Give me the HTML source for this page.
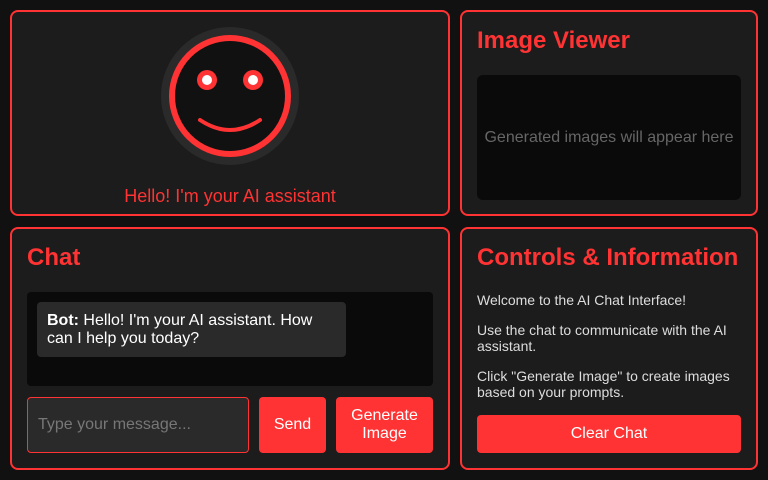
<!DOCTYPE html>
<html><head><style>
*{box-sizing:border-box;margin:0;padding:0}
body{width:768px;height:480px;background:#111;font-family:"Liberation Sans",sans-serif;position:relative;overflow:hidden}
.p{position:absolute;background:#1c1c1c;border:2px solid #ff3333;border-radius:8px}
.a{position:absolute}
h2{position:absolute;color:#ff3333;font-size:24px;font-weight:bold}
.btn{position:absolute;background:#ff3333;color:#fff;border-radius:4px;font-size:16px;display:flex;align-items:center;justify-content:center;text-align:center;line-height:18px}
.t{position:absolute;left:477px;color:#ddd;font-size:14px;line-height:16px;width:270px}
</style></head><body>
<div class="p" style="left:10px;top:10px;width:440px;height:206px"></div>
<div class="p" style="left:460px;top:10px;width:298px;height:206px"></div>
<div class="p" style="left:10px;top:227px;width:440px;height:243px"></div>
<div class="p" style="left:460px;top:227px;width:298px;height:243px"></div>
<svg class="a" style="left:160px;top:26px" width="140" height="140" viewBox="0 0 140 140">
<circle cx="70" cy="70" r="69" fill="#2a2a2a"/>
<circle cx="70" cy="70" r="58" fill="#111" stroke="#ff3333" stroke-width="6"/>
<circle cx="47" cy="54" r="10" fill="#ff3333"/><circle cx="47" cy="54" r="5" fill="#fff"/>
<circle cx="93" cy="54" r="10" fill="#ff3333"/><circle cx="93" cy="54" r="5" fill="#fff"/>
<path d="M40 94 Q70 114 100 94" fill="none" stroke="#ff3333" stroke-width="4" stroke-linecap="round"/>
</svg>
<div class="a" style="left:10px;width:440px;top:186px;text-align:center;color:#ff3333;font-size:18px">Hello! I'm your AI assistant</div>
<h2 style="left:477px;top:27px">Image Viewer</h2>
<div class="a" style="left:477px;top:75px;width:264px;height:125px;background:#0a0a0a;border-radius:6px;color:#666;font-size:16px;display:flex;align-items:center;justify-content:center">Generated images will appear here</div>
<h2 style="left:27px;top:244px">Chat</h2>
<div class="a" style="left:27px;top:292px;width:406px;height:94px;background:#0a0a0a;border-radius:4px"></div>
<div class="a" style="left:37px;top:302px;width:309px;height:55px;background:#2a2a2a;border-radius:4px;color:#fff;font-size:16px;line-height:18px;padding:10px 10px">
<b>Bot:</b> Hello! I'm your AI assistant. How can I help you today?</div>
<div class="a" style="left:27px;top:397px;width:222px;height:56px;background:#2a2a2a;border:1px solid #ff3333;border-radius:4px;color:#777;font-size:16px;padding:18px 10px">Type your message...</div>
<div class="btn" style="left:259px;top:397px;width:67px;height:56px">Send</div>
<div class="btn" style="left:336px;top:397px;width:97px;height:56px">Generate<br>Image</div>
<h2 style="left:477px;top:244px">Controls &amp; Information</h2>
<div class="t" style="top:292px">Welcome to the AI Chat Interface!</div>
<div class="t" style="top:322px">Use the chat to communicate with the AI assistant.</div>
<div class="t" style="top:368px">Click "Generate Image" to create images based on your prompts.</div>
<div class="btn" style="left:477px;top:415px;width:264px;height:38px">Clear Chat</div>
</body></html>
